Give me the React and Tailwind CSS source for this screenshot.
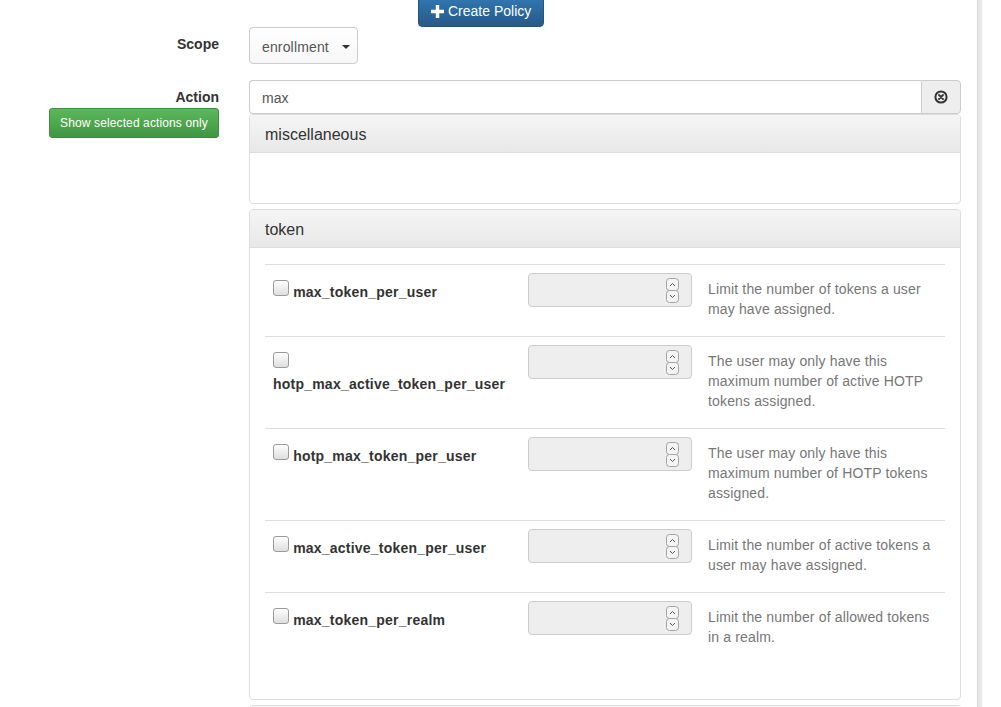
import React from 'react';

const actions = [
  { name: 'max_token_per_user', desc: 'Limit the number of tokens a user may have assigned.' },
  { name: 'hotp_max_active_token_per_user', desc: 'The user may only have this maximum number of active HOTP tokens assigned.' },
  { name: 'hotp_max_token_per_user', desc: 'The user may only have this maximum number of HOTP tokens assigned.' },
  { name: 'max_active_token_per_user', desc: 'Limit the number of active tokens a user may have assigned.' },
  { name: 'max_token_per_realm', desc: 'Limit the number of allowed tokens in a realm.' },
];

const PlusIcon = () => (
  <svg width="13" height="13" viewBox="0 0 12 12" className="inline-block align-[-1px]">
    <path d="M4.4 0h3.2v4.4H12v3.2H7.6V12H4.4V7.6H0V4.4h4.4z" fill="#fff" />
  </svg>
);

const RemoveCircle = () => (
  <svg width="14" height="14" viewBox="0 0 14 14">
    <circle cx="7" cy="7" r="5.6" fill="none" stroke="#333" strokeWidth="2" />
    <path d="M5 5l4 4M9 5l-4 4" stroke="#333" strokeWidth="1.8" strokeLinecap="round" />
  </svg>
);

const Spinner = () => (
  <svg width="13" height="25" viewBox="0 0 13 25">
    <rect x="0.5" y="0.5" width="12" height="12" rx="3" fill="#f4f4f4" stroke="#a3a3a3" />
    <rect x="0.5" y="12.5" width="12" height="12" rx="3" fill="#f4f4f4" stroke="#a3a3a3" />
    <path d="M4 8l2.5-2.5L9 8" fill="none" stroke="#555" strokeWidth="1" />
    <path d="M4 17l2.5 2.5L9 17" fill="none" stroke="#555" strokeWidth="1" />
  </svg>
);

const Checkbox = () => (
  <span className="inline-block w-[16px] h-[16px] mb-[1px] align-baseline rounded-[3px] border border-[#9b9b9b] bg-linear-to-b from-white to-[#dedede]" />
);

const PanelHeading = ({ title }) => (
  <div className="h-[38px] px-[15px] pt-[3px] flex items-center text-[16px] text-[#333] bg-linear-to-b from-[#f5f5f5] to-[#e8e8e8] border-b border-[#ddd] rounded-t-[3px]">
    {title}
  </div>
);

const ActionRow = ({ name, desc }) => (
  <div className="flex items-start border-t border-[#ddd]">
    <div className="w-[255px] px-2 pt-[15px] text-[14px] leading-[20px] font-bold tracking-[0.22px] text-[#333]">
      <Checkbox />{' '}{name}
    </div>
    <div className="w-[180px] px-2 pt-[8px]">
      <div className="h-[34px] rounded-[4px] border border-[#ccc] bg-[#eee] flex items-center justify-end pr-[12px]">
        <Spinner />
      </div>
    </div>
    <div className="w-[245px] px-2 pt-[14px] pb-[17px] text-[14px] leading-[20px] tracking-[0.15px] text-[#777]">
      {desc}
    </div>
  </div>
);

export default function App() {
  return (
    <div className="flex min-h-[707px] bg-white font-['Liberation_Sans',Arial,sans-serif] text-[14px] text-[#333] overflow-hidden">
      <div className="w-[977px] shrink-0">
        {/* top button */}
        <div className="pl-[418px] -mt-[7px]">
          <button className="h-[34px] px-[12px] pt-[2px] flex items-center gap-[4px] text-[14px] text-white bg-linear-to-b from-[#337ab7] to-[#265a88] border border-[#245580] rounded-[4px]">
            <PlusIcon />
            <span>Create Policy</span>
          </button>
        </div>

        {/* scope */}
        <div className="flex mb-[16px]">
          <div className="w-[234px] pr-[15px] pt-[7px] text-right font-bold leading-[20px]">Scope</div>
          <div className="pl-[15px]">
            <div className="w-[109px] h-[37px] pl-[12px] pt-[3px] flex items-center rounded-[4px] border border-[#ccc] bg-linear-to-b from-white to-[#f7f7f7] text-[#555] tracking-[0.15px]">
              <span>enrollment</span>
              <span className="ml-[13px] -mt-[1px] w-0 h-0 border-x-[4px] border-x-transparent border-t-[4px] border-t-[#333]" />
            </div>
          </div>
        </div>

        {/* action */}
        <div className="flex">
          <div className="w-[234px] pr-[15px] flex flex-col items-end">
            <div className="pt-[7px] font-bold leading-[20px]">Action</div>
            <button className="mt-[1px] w-[170px] h-[30px] rounded-[3px] border border-[#3e8f3e] bg-linear-to-b from-[#5cb85c] to-[#419641] text-white text-[12px] tracking-[0.12px]">
              Show selected actions only
            </button>
          </div>
          <div className="pl-[15px] w-[727px]">
            <div className="flex h-[34px]">
              <div className="flex-1 flex items-center px-[12px] pt-[2px] border border-[#ccc] border-r-0 rounded-l-[4px] text-[#555]">max</div>
              <div className="w-[40px] flex items-center justify-center bg-[#eee] border border-[#ccc] rounded-r-[4px]">
                <RemoveCircle />
              </div>
            </div>

            <div className="border border-[#ddd] rounded-[4px]">
              <PanelHeading title="miscellaneous" />
              <div className="h-[50px]" />
            </div>

            <div className="mt-[5px] border border-[#ddd] rounded-[4px]">
              <PanelHeading title="token" />
              <div className="px-[15px] pt-[16px] pb-[35px]">
                {actions.map((a) => (
                  <ActionRow key={a.name} name={a.name} desc={a.desc} />
                ))}
              </div>
            </div>

            <div className="mt-[5px] border border-[#ddd] rounded-[4px]">
              <PanelHeading title="" />
            </div>
          </div>
        </div>
      </div>
      <div className="w-[5px] shrink-0 bg-[#e9e9e9] border-l border-[#d9d9d9]" />
      <div className="flex-1" />
    </div>
  );
}
